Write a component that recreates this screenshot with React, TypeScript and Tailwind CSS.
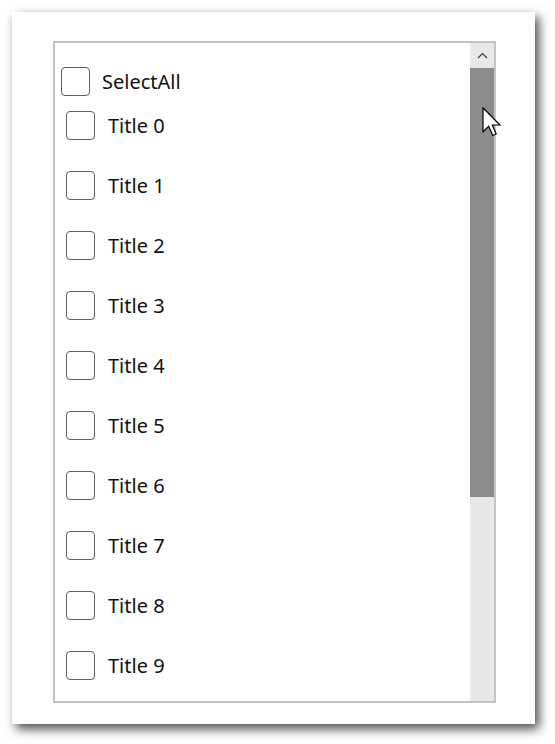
import React from 'react'

const titles = Array.from({ length: 10 }, (_, i) => `Title ${i}`)

function Box() {
  return <span className="block h-[29px] w-[29px] shrink-0 rounded-[4px] border-[1.5px] border-[#5f5f5f] bg-white" />
}

function Cursor() {
  return (
    <svg className="pointer-events-none absolute left-[482px] top-[107px]" width="20" height="30" viewBox="0 0 13 20">
      <path d="M0.5 0.5 L0.5 16.5 L4.3 12.8 L7 19 L9.3 18 L6.7 12 L11.8 12 Z" fill="#fff" stroke="#000" strokeWidth="0.8" strokeLinejoin="miter" />
    </svg>
  )
}

export default function App() {
  return (
    <div className="relative h-[744px] w-[555px] bg-white" style={{ fontFamily: '"Noto Sans", "Open Sans", sans-serif' }}>
      <div className="ml-[12px] pt-[12px]">
        <div className="h-[712px] w-[523px] bg-white pl-[41px] pt-[29px] shadow-[4px_5px_10px_rgba(0,0,0,0.7)]">
          <div className="flex h-[662px] w-[443px] border-2 border-[#c4c4c4] bg-white">
            <div className="flex-1 overflow-hidden">
              <label className="flex items-center gap-[12px] pl-[6px] pt-[24px] text-[20px] leading-none text-[#111]">
                <Box />
                <span>SelectAll</span>
              </label>
              <ul className="pl-[11px] pt-[15px]">
                {titles.map((t) => (
                  <li key={t} className="flex h-[60px] items-start gap-[13px] text-[20px] leading-[29px] text-[#111]">
                    <Box />
                    <span>{t}</span>
                  </li>
                ))}
              </ul>
            </div>
            <div className="flex w-[24px] flex-col bg-[#e8e8e8]">
              <div className="flex h-[25px] items-center justify-center">
                <svg width="11" height="7" viewBox="0 0 11 7">
                  <path d="M1 6 L5.5 1.5 L10 6" fill="none" stroke="#333" strokeWidth="1.1" />
                </svg>
              </div>
              <div className="h-[429px] bg-[#8d8d8d]" />
            </div>
          </div>
        </div>
      </div>
      <Cursor />
    </div>
  )
}
